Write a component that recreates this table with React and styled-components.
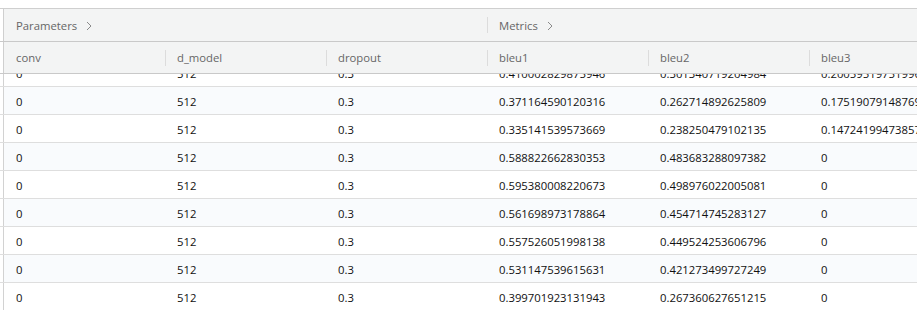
import React from 'react';
import styled, { createGlobalStyle, css } from 'styled-components';

const COL = 161;

const GlobalStyle = createGlobalStyle`
  body {
    margin: 0;
    background: #ffffff;
    font-family: "Open Sans", "Noto Sans", sans-serif;
  }
`;

// Page shell
const Page = styled.div`
  width: 917px;
  height: 310px;
  padding-top: 8px;
  box-sizing: border-box;
  overflow: hidden;
`;

const Grid = styled.div`
  border-top: 1px solid #cfcfcf;
  width: 100%;
`;

const HeaderRow = styled.div`
  display: flex;
  height: ${(p) => p.$height}px;
  border-bottom: 1px solid #c9c9c9;
  padding-left: 3px;
`;

const HeaderInner = styled.div`
  display: flex;
  flex: 1;
  background: #f3f4f4;
  border-left: 1px solid #cfcfcf;
`;

const divider = css`
  &::before {
    content: '';
    position: absolute;
    left: 0;
    top: 50%;
    width: 1px;
    height: 16px;
    margin-top: -8px;
    background: #dcdcdc;
  }
`;

const HeadCell = styled.div`
  position: relative;
  flex-shrink: 0;
  width: ${(p) => p.$span * COL}px;
  box-sizing: border-box;
  padding: ${(p) => p.$top || 0}px 0 0 12px;
  display: flex;
  align-items: center;
  gap: 9px;
  font-size: 11.3px;
  color: #666666;
  white-space: nowrap;
  ${(p) => p.$divider && divider}
`;

const Chevron = styled.svg`
  width: 6px;
  height: 10px;
  flex-shrink: 0;
`;

// Scrolled body
const Viewport = styled.div`
  height: 236px;
  overflow: hidden;
`;

const Scroller = styled.div`
  margin-top: -15px;
`;

const Row = styled.div`
  display: flex;
  height: 28px;
  box-sizing: border-box;
  border-bottom: 1px solid #dedede;
  padding-left: 3px;
`;

const RowInner = styled.div`
  display: flex;
  flex: 1;
  border-left: 1px solid #d2d2d2;
  background: ${(p) => (p.$alt ? '#f9fbfd' : '#ffffff')};
`;

const Cell = styled.div`
  flex-shrink: 0;
  width: ${COL}px;
  box-sizing: border-box;
  padding: 2px 0 0 12px;
  display: flex;
  align-items: center;
  font-size: 11.3px;
  color: #111111;
  white-space: nowrap;
`;

const columns = ['conv', 'd_model', 'dropout', 'bleu1', 'bleu2', 'bleu3'];

const metrics = [
  ['0.410002829875946', '0.301340719204984', '0.200595197519968'],
  ['0.371164590120316', '0.262714892625809', '0.175190791487693'],
  ['0.335141539573669', '0.238250479102135', '0.147241994738572'],
  ['0.588822662830353', '0.483683288097382', '0'],
  ['0.595380008220673', '0.498976022005081', '0'],
  ['0.561698973178864', '0.454714745283127', '0'],
  ['0.557526051998138', '0.449524253606796', '0'],
  ['0.531147539615631', '0.421273499727249', '0'],
  ['0.399701923131943', '0.267360627651215', '0'],
];

const ChevronIcon = () => (
  <Chevron viewBox="0 0 6 10">
    <path d="M1 1l4 4-4 4" fill="none" stroke="#8a8a8a" strokeWidth="1" />
  </Chevron>
);

const App = () => {
  return (
    <Page>
      <GlobalStyle />
      <Grid>
        <HeaderRow $height={32}>
          <HeaderInner>
            <HeadCell $span={3} $top={1}>
              Parameters <ChevronIcon />
            </HeadCell>
            <HeadCell $span={3} $top={1} $divider>
              Metrics <ChevronIcon />
            </HeadCell>
          </HeaderInner>
        </HeaderRow>
        <HeaderRow $height={31}>
          <HeaderInner>
            {columns.map((c, i) => (
              <HeadCell key={c} $span={1} $divider={i > 0}>
                {c}
              </HeadCell>
            ))}
          </HeaderInner>
        </HeaderRow>
        <Viewport>
          <Scroller>
            {metrics.map((m, i) => (
              <Row key={i}>
                <RowInner $alt={i % 2 === 1}>
                  <Cell>0</Cell>
                  <Cell>512</Cell>
                  <Cell>0.3</Cell>
                  {m.map((v, j) => (
                    <Cell key={j}>{v}</Cell>
                  ))}
                </RowInner>
              </Row>
            ))}
          </Scroller>
        </Viewport>
      </Grid>
    </Page>
  );
};

export default App;
